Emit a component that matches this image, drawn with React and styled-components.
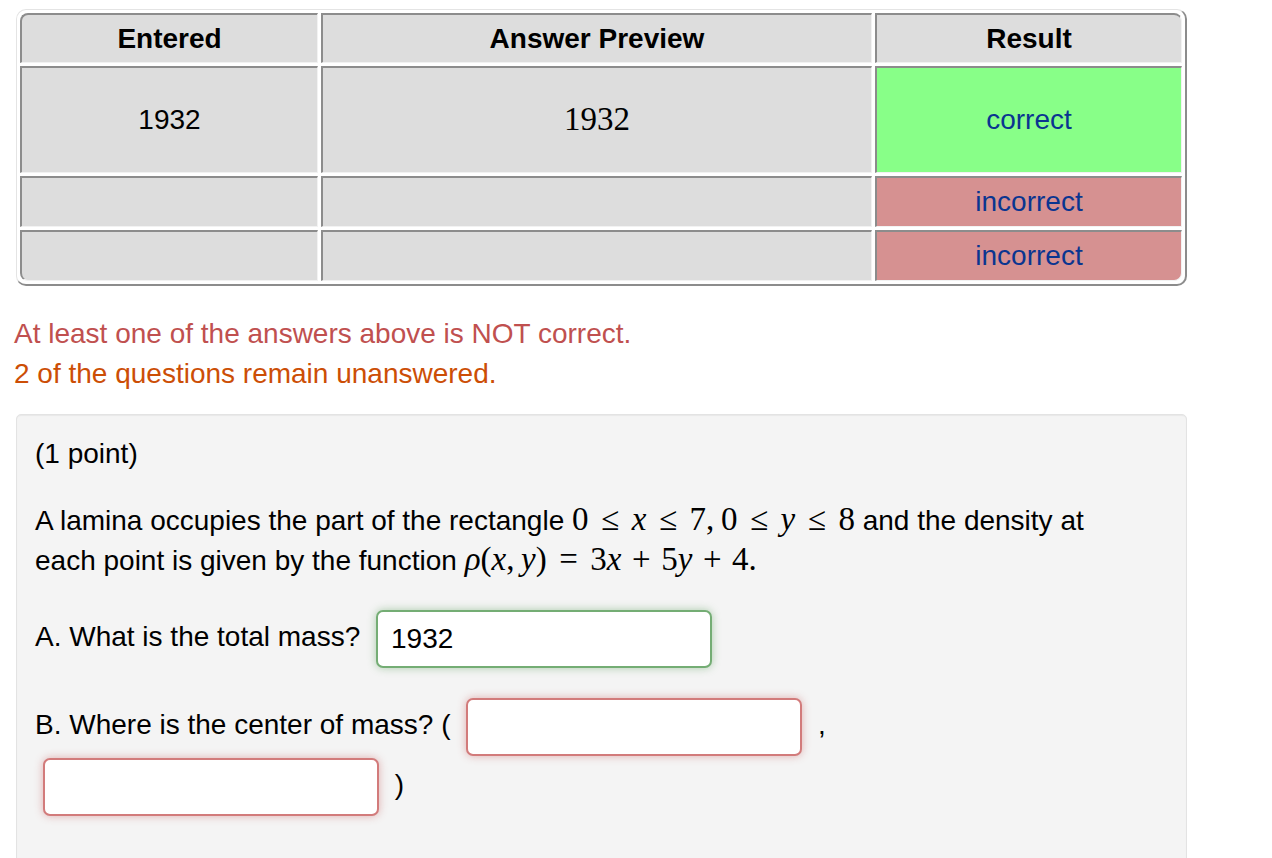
import React from "react";
import styled, { createGlobalStyle } from "styled-components";

const GlobalStyle = createGlobalStyle`
  html, body {
    margin: 0;
    background: #fff;
  }
  body {
    font-family: "Liberation Sans", Arial, Helvetica, sans-serif;
    color: #000;
  }
`;

const S = {
  Page: styled.div`
    width: 1171px;
    padding: 9px 0 0 16px;
  `,
  Table: styled.table`
    width: 1171px;
    table-layout: fixed;
    border-collapse: separate;
    border-spacing: 3px;
    border-style: solid;
    border-width: 1px 2px 2px 1px;
    border-color: #e4e4e4 #8c8c8c #8c8c8c #e4e4e4;
    border-radius: 10px;
    font-size: 28px;
  `,
  Head: styled.th`
    height: 47px;
    padding: 0;
    background: #dddddd;
    font-weight: bold;
    text-align: center;
    border-style: solid;
    border-width: 2px 1px 1px 2px;
    border-color: #8c8c8c #f2f2f2 #f2f2f2 #8c8c8c;
    &:first-child { border-top-left-radius: 8px; }
    &:last-child { border-top-right-radius: 8px; }
  `,
  Cell: styled.td`
    height: ${(p) => (p.$tall ? "104px" : "48px")};
    padding: 0;
    text-align: center;
    vertical-align: middle;
    background: ${(p) =>
      p.$status === "correct" ? "#88ff88" : p.$status === "incorrect" ? "#d69191" : "#dddddd"};
    color: ${(p) => (p.$status ? "#0a3590" : "#000")};
    border-style: solid;
    border-width: 2px 1px 1px 2px;
    border-color: #8c8c8c #f2f2f2 #f2f2f2 #8c8c8c;
    tr:last-child > &:first-child { border-bottom-left-radius: 8px; }
    tr:last-child > &:last-child { border-bottom-right-radius: 8px; }
  `,
  Messages: styled.div`
    margin-top: 28px;
    font-size: 28px;
    line-height: 40px;
  `,
  Message: styled.div`
    margin-left: -2px;
    color: ${(p) => (p.$warn ? "#cc4e06" : "#c0504f")};
  `,
  Well: styled.div`
    margin-top: 20px;
    padding: 19px 42px 60px 18px;
    background: #f4f4f4;
    border: 1px solid #e3e3e3;
    border-radius: 5px;
    box-shadow: inset 0 1px 1px rgba(0, 0, 0, 0.05);
    font-size: 28px;
    line-height: 40px;
  `,
  Points: styled.div`
    margin-bottom: 27px;
  `,
  Para: styled.p`
    margin: 0 0 28px;
  `,
  Part: styled.div`
    margin-bottom: 28px;
  `,
  Answer: styled.input`
    display: inline-block;
    vertical-align: middle;
    box-sizing: border-box;
    width: 336px;
    height: 58px;
    margin: 1px 8px;
    padding: 0 13px;
    font: 28px "Liberation Sans", Arial, sans-serif;
    color: #000;
    background: #fff;
    border: 2px solid
      ${(p) => (p.$ok ? "rgba(81, 153, 81, 0.8)" : "rgba(199, 90, 90, 0.8)")};
    border-radius: 7px;
    box-shadow: 0 0 8px
      ${(p) => (p.$ok ? "rgba(81, 153, 81, 0.45)" : "rgba(199, 90, 90, 0.45)")};
    outline: none;
  `,
  Math: styled.span`
    font-family: "Liberation Serif", "Times New Roman", serif;
    font-size: 33px;
    line-height: 1;
    white-space: nowrap;
  `,
  Var: styled.i`
    font-style: italic;
  `,
  Op: styled.span`
    margin: 0 ${(p) => (p.$rel ? "0.38em" : p.$bin ? "0.32em" : "0")};
  `,
  Gap: styled.span`
    margin-left: 0.2em;
  `,
};

const results = [
  { entered: "1932", preview: "1932", status: "correct", tall: true },
  { entered: "", preview: "", status: "incorrect" },
  { entered: "", preview: "", status: "incorrect" },
];

const App = () => (
  <>
    <GlobalStyle />
    <S.Page>
      <S.Table>
        <colgroup>
          <col style={{ width: 298 }} />
          <col style={{ width: 551 }} />
          <col style={{ width: 307 }} />
        </colgroup>
        <thead>
          <tr>
            <S.Head>Entered</S.Head>
            <S.Head>Answer Preview</S.Head>
            <S.Head>Result</S.Head>
          </tr>
        </thead>
        <tbody>
          {results.map((r, i) => (
            <tr key={i}>
              <S.Cell $tall={r.tall}>{r.entered}</S.Cell>
              <S.Cell $tall={r.tall}>{r.preview && <S.Math>{r.preview}</S.Math>}</S.Cell>
              <S.Cell $tall={r.tall} $status={r.status}>
                {r.status}
              </S.Cell>
            </tr>
          ))}
        </tbody>
      </S.Table>

      <S.Messages>
        <S.Message>At least one of the answers above is NOT correct.</S.Message>
        <S.Message $warn>2 of the questions remain unanswered.</S.Message>
      </S.Messages>

      <S.Well>
        <S.Points>(1 point)</S.Points>
        <S.Para>
          A lamina occupies the part of the rectangle{" "}
          <S.Math>
            0<S.Op $rel>≤</S.Op>
            <S.Var>x</S.Var>
            <S.Op $rel>≤</S.Op>7,<S.Gap />0<S.Op $rel>≤</S.Op>
            <S.Var>y</S.Var>
            <S.Op $rel>≤</S.Op>8
          </S.Math>{" "}
          and the density at each point is given by the function{" "}
          <S.Math>
            <S.Var>ρ</S.Var>(<S.Var>x</S.Var>,<S.Gap />
            <S.Var>y</S.Var>)<S.Op $rel>=</S.Op>3<S.Var>x</S.Var>
            <S.Op $bin>+</S.Op>5<S.Var>y</S.Var>
            <S.Op $bin>+</S.Op>4.
          </S.Math>
        </S.Para>
        <S.Part>
          A. What is the total mass? <S.Answer $ok defaultValue="1932" />
        </S.Part>
        <S.Part>
          B. Where is the center of mass? ( <S.Answer /> , <S.Answer /> )
        </S.Part>
      </S.Well>
    </S.Page>
  </>
);

export default App;
